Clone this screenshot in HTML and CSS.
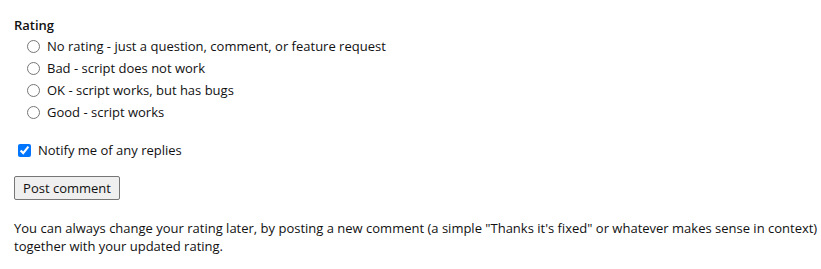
FILE: index.html
```html
<!DOCTYPE html>
<html>
<head>
<meta charset="utf-8">
<link rel="stylesheet" href="styles.css">
</head>
<body>
<form class="comment-form">
  <div class="rating">
    <div class="rating-title">Rating</div>
    <ul class="rating-list">
      <li class="rating-item"><input type="radio" name="rating" class="radio"><span>No rating - just a question, comment, or feature request</span></li>
      <li class="rating-item"><input type="radio" name="rating" class="radio"><span>Bad - script does not work</span></li>
      <li class="rating-item"><input type="radio" name="rating" class="radio"><span>OK - script works, but has bugs</span></li>
      <li class="rating-item"><input type="radio" name="rating" class="radio"><span>Good - script works</span></li>
    </ul>
  </div>
  <div class="notify"><input type="checkbox" class="check" checked><span>Notify me of any replies</span></div>
  <div class="actions"><button type="button" class="post-btn">Post comment</button></div>
  <p class="note">You can always change your rating later, by posting a new comment (a simple "Thanks it's fixed" or whatever makes sense in context) together with your updated rating.</p>
</form>
</body>
</html>
```
FILE: styles.css
```css
html, body {
  margin: 0;
  padding: 0;
  background: #fff;
}
body {
  font-family: "Open Sans", sans-serif;
  font-size: 13px;
  color: #111;
  padding: 15px 0 0 14px;
}
.rating-title {
  font-weight: 600;
  line-height: 20px;
}
.rating-list {
  list-style: none;
  margin: 0;
  padding: 0 0 0 13px;
}
.rating-item {
  display: flex;
  align-items: center;
  height: 22px;
}
.radio {
  margin: 0 7px 0 0;
  width: 13px;
  height: 13px;
}
.notify {
  display: flex;
  align-items: center;
  height: 22px;
  margin-top: 16px;
  padding-left: 4px;
}
.check {
  margin: 0 7px 0 0;
  width: 13px;
  height: 13px;
}
.actions {
  margin-top: 15px;
}
.post-btn {
  font-family: "Open Sans", sans-serif;
  font-size: 13px;
  color: #111;
  padding: 1px 7px;
  height: 24px;
  width: 106px;
  line-height: 18px;
  background: #efefef;
  border: 1px solid #767676;
  border-radius: 2px;
}
.note {
  margin: 19px 0 0 0;
  line-height: 18px;
  width: 810px;
}
```
